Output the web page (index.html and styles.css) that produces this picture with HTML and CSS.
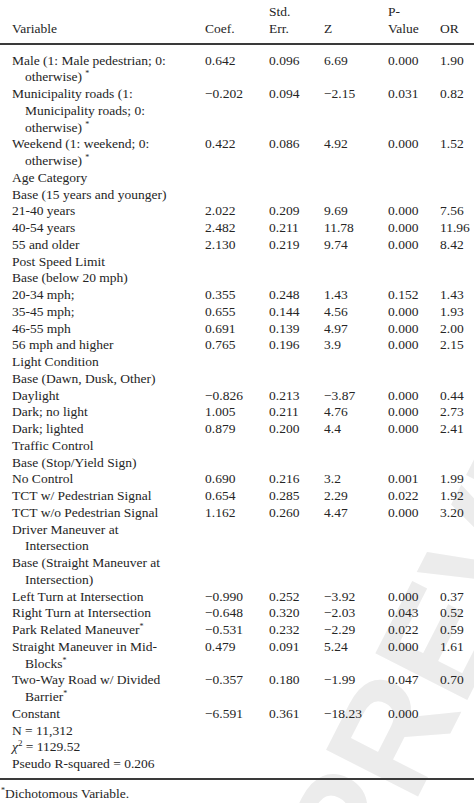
FILE: index.html
```html
<!DOCTYPE html>
<html lang="en">
<head>
<meta charset="utf-8">
<title>Model results</title>
<link rel="stylesheet" href="styles.css">
</head>
<body>
<div class="watermark" aria-hidden="true">PREVIEW</div>
<table class="results">
  <colgroup>
    <col class="c-var"><col class="c-coef"><col class="c-se"><col class="c-z"><col class="c-p"><col class="c-or">
  </colgroup>
  <thead>
    <tr>
      <th class="var">Variable</th>
      <th>Coef.</th>
      <th>Std.<br>Err.</th>
      <th>Z</th>
      <th>P-<br>Value</th>
      <th>OR</th>
    </tr>
  </thead>
  <tbody>
    <tr class="first"><td class="var">Male (1: Male pedestrian; 0:<br>otherwise) <sup class="star">*</sup></td><td>0.642</td><td>0.096</td><td>6.69</td><td>0.000</td><td>1.90</td></tr>
    <tr><td class="var">Municipality roads (1:<br>Municipality roads; 0:<br>otherwise) <sup class="star">*</sup></td><td>&minus;0.202</td><td>0.094</td><td>&minus;2.15</td><td>0.031</td><td>0.82</td></tr>
    <tr><td class="var">Weekend (1: weekend; 0:<br>otherwise) <sup class="star">*</sup></td><td>0.422</td><td>0.086</td><td>4.92</td><td>0.000</td><td>1.52</td></tr>
    <tr><td class="var">Age Category</td><td></td><td></td><td></td><td></td><td></td></tr>
    <tr><td class="var">Base (15 years and younger)</td><td></td><td></td><td></td><td></td><td></td></tr>
    <tr><td class="var">21-40 years</td><td>2.022</td><td>0.209</td><td>9.69</td><td>0.000</td><td>7.56</td></tr>
    <tr><td class="var">40-54 years</td><td>2.482</td><td>0.211</td><td>11.78</td><td>0.000</td><td>11.96</td></tr>
    <tr><td class="var">55 and older</td><td>2.130</td><td>0.219</td><td>9.74</td><td>0.000</td><td>8.42</td></tr>
    <tr><td class="var">Post Speed Limit</td><td></td><td></td><td></td><td></td><td></td></tr>
    <tr><td class="var">Base (below 20 mph)</td><td></td><td></td><td></td><td></td><td></td></tr>
    <tr><td class="var">20-34 mph;</td><td>0.355</td><td>0.248</td><td>1.43</td><td>0.152</td><td>1.43</td></tr>
    <tr><td class="var">35-45 mph;</td><td>0.655</td><td>0.144</td><td>4.56</td><td>0.000</td><td>1.93</td></tr>
    <tr><td class="var">46-55 mph</td><td>0.691</td><td>0.139</td><td>4.97</td><td>0.000</td><td>2.00</td></tr>
    <tr><td class="var">56 mph and higher</td><td>0.765</td><td>0.196</td><td>3.9</td><td>0.000</td><td>2.15</td></tr>
    <tr><td class="var">Light Condition</td><td></td><td></td><td></td><td></td><td></td></tr>
    <tr><td class="var">Base (Dawn, Dusk, Other)</td><td></td><td></td><td></td><td></td><td></td></tr>
    <tr><td class="var">Daylight</td><td>&minus;0.826</td><td>0.213</td><td>&minus;3.87</td><td>0.000</td><td>0.44</td></tr>
    <tr><td class="var">Dark; no light</td><td>1.005</td><td>0.211</td><td>4.76</td><td>0.000</td><td>2.73</td></tr>
    <tr><td class="var">Dark; lighted</td><td>0.879</td><td>0.200</td><td>4.4</td><td>0.000</td><td>2.41</td></tr>
    <tr><td class="var">Traffic Control</td><td></td><td></td><td></td><td></td><td></td></tr>
    <tr><td class="var">Base (Stop/Yield Sign)</td><td></td><td></td><td></td><td></td><td></td></tr>
    <tr><td class="var">No Control</td><td>0.690</td><td>0.216</td><td>3.2</td><td>0.001</td><td>1.99</td></tr>
    <tr><td class="var">TCT w/ Pedestrian Signal</td><td>0.654</td><td>0.285</td><td>2.29</td><td>0.022</td><td>1.92</td></tr>
    <tr><td class="var">TCT w/o Pedestrian Signal</td><td>1.162</td><td>0.260</td><td>4.47</td><td>0.000</td><td>3.20</td></tr>
    <tr><td class="var">Driver Maneuver at<br>Intersection</td><td></td><td></td><td></td><td></td><td></td></tr>
    <tr><td class="var">Base (Straight Maneuver at<br>Intersection)</td><td></td><td></td><td></td><td></td><td></td></tr>
    <tr><td class="var">Left Turn at Intersection</td><td>&minus;0.990</td><td>0.252</td><td>&minus;3.92</td><td>0.000</td><td>0.37</td></tr>
    <tr><td class="var">Right Turn at Intersection</td><td>&minus;0.648</td><td>0.320</td><td>&minus;2.03</td><td>0.043</td><td>0.52</td></tr>
    <tr><td class="var">Park Related Maneuver<sup class="star">*</sup></td><td>&minus;0.531</td><td>0.232</td><td>&minus;2.29</td><td>0.022</td><td>0.59</td></tr>
    <tr><td class="var">Straight Maneuver in Mid-<br>Blocks<sup class="star">*</sup></td><td>0.479</td><td>0.091</td><td>5.24</td><td>0.000</td><td>1.61</td></tr>
    <tr><td class="var">Two-Way Road w/ Divided<br>Barrier<sup class="star">*</sup></td><td>&minus;0.357</td><td>0.180</td><td>&minus;1.99</td><td>0.047</td><td>0.70</td></tr>
    <tr><td class="var">Constant</td><td>&minus;6.591</td><td>0.361</td><td>&minus;18.23</td><td>0.000</td><td></td></tr>
    <tr><td class="var">N = 11,312</td><td></td><td></td><td></td><td></td><td></td></tr>
    <tr><td class="var"><i>&chi;</i><sup class="sq">2</sup> = 1129.52</td><td></td><td></td><td></td><td></td><td></td></tr>
    <tr class="last"><td class="var">Pseudo R-squared = 0.206</td><td></td><td></td><td></td><td></td><td></td></tr>
  </tbody>
</table>
<p class="note"><sup class="star">*</sup>Dichotomous Variable.</p>
</body>
</html>
```

FILE: styles.css
```css
html, body {
  margin: 0;
  padding: 0;
  background: #ffffff;
}

body {
  position: relative;
  width: 474px;
  height: 803px;
  overflow: hidden;
  font-family: "Liberation Serif", "Times New Roman", serif;
  font-size: 13.5px;
  line-height: 16.75px;
  color: #252525;
}

.watermark {
  position: absolute;
  left: 255px;
  top: 837px;
  z-index: 0;
  font-family: "Liberation Sans", Arial, sans-serif;
  font-weight: bold;
  font-size: 150px;
  line-height: 1;
  color: #ececec;
  white-space: nowrap;
  transform: rotate(-63deg);
  transform-origin: 0 0;
}

.results {
  position: relative;
  z-index: 1;
  width: 474px;
  border-collapse: collapse;
  table-layout: fixed;
}

.c-var { width: 205px; }
.c-coef { width: 64px; }
.c-se { width: 55px; }
.c-z { width: 64px; }
.c-p { width: 52px; }
.c-or { width: 34px; }

.results th,
.results td {
  padding: 0;
  text-align: left;
  font-weight: normal;
  vertical-align: top;
  white-space: nowrap;
}

.results thead th {
  vertical-align: bottom;
  padding-top: 4px;
  padding-bottom: 5px;
  border-bottom: 2px solid #3a3a3a;
}

.results .var {
  padding-left: 25px;
  text-indent: -13px;
}

.results tr.first td {
  padding-top: 8px;
}

.results tr.last td {
  padding-bottom: 5px;
  border-bottom: 2px solid #3a3a3a;
}

.star {
  font-size: 8px;
  line-height: 0;
  vertical-align: 5px;
}

.sq {
  font-size: 9px;
  line-height: 0;
  vertical-align: 5px;
}

.note {
  position: relative;
  z-index: 1;
  margin: 6px 0 0 1px;
}
```
